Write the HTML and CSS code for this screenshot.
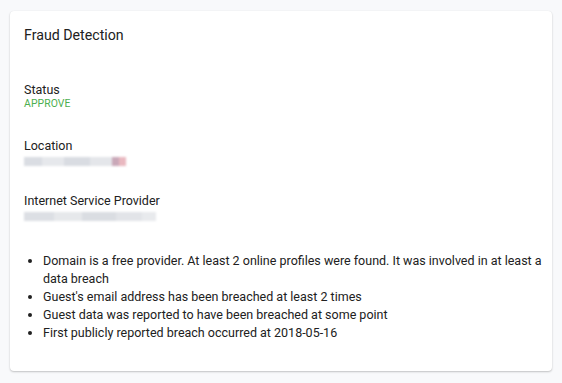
FILE: index.html
```html
<!DOCTYPE html>
<html>
<head>
<meta charset="utf-8">
<link rel="stylesheet" href="styles.css">
</head>
<body>
<div class="card">
  <div class="title">Fraud Detection</div>
  <div class="field first">
    <div class="label">Status</div>
    <div class="status">APPROVE</div>
  </div>
  <div class="field">
    <div class="label">Location</div>
    <div class="blur loc"><span class="b1"></span><span class="b2"></span><span class="b3"></span><span class="b4"></span><span class="b5"></span><span class="b6"></span></div>
  </div>
  <div class="field last">
    <div class="label">Internet Service Provider</div>
    <div class="blur isp"><span class="b1"></span><span class="b2"></span><span class="b3"></span><span class="b4"></span><span class="b5"></span></div>
  </div>
  <ul class="notes">
    <li>Domain is a free provider. At least 2 online profiles were found. It was involved in at least a data breach</li>
    <li>Guest's email address has been breached at least 2 times</li>
    <li>Guest data was reported to have been breached at some point</li>
    <li>First publicly reported breach occurred at 2018-05-16</li>
  </ul>
</div>
</body>
</html>
```
FILE: styles.css
```css
html, body {
  margin: 0;
  padding: 0;
}
body {
  background: #f8f9fb;
  font-family: Roboto, "Liberation Sans", sans-serif;
  color: #222;
  padding: 11px 10px;
  width: 542px;
}
.card {
  background: #fff;
  border-radius: 4px;
  box-shadow: 0 1px 2px rgba(0,0,0,0.22), 0 0 1px rgba(0,0,0,0.08);
  padding: 16px 6px 0 14px;
  height: 344px;
}
.title {
  font-size: 14.2px;
  line-height: 16px;
  color: #212121;
}
.field {
  margin-top: 29px;
}
.field.first {
  margin-top: 40px;
}
.field.last {
  margin-top: 28px;
}
.label {
  font-size: 12.5px;
  line-height: 14px;
  color: #212121;
}
.status {
  font-size: 10.4px;
  line-height: 13px;
  color: #4caf50;
  letter-spacing: 0.1px;
}
.blur {
  display: flex;
  height: 9px;
  margin-top: 4px;
  filter: blur(1px);
}
.blur span { display: block; height: 9px; }
.loc .b1 { width: 18px; background: #dadde3; }
.loc .b2 { width: 22px; background: #e6e8ec; }
.loc .b3 { width: 26px; background: #d9dce2; }
.loc .b4 { width: 22px; background: #e4e6ea; }
.loc .b5 { width: 7px; background: #c9a8b8; }
.loc .b6 { width: 7px; background: #e9b8c0; }
.isp .b1 { width: 30px; background: #dcdfe4; }
.isp .b2 { width: 28px; background: #e6e8eb; }
.isp .b3 { width: 34px; background: #dadde2; }
.isp .b4 { width: 26px; background: #e2e4e8; }
.isp .b5 { width: 14px; background: #e8eaed; }
.notes {
  margin: 31px 0 0 0;
  padding-left: 19px;
  font-size: 12.5px;
  line-height: 18px;
  color: #212121;
}
```
